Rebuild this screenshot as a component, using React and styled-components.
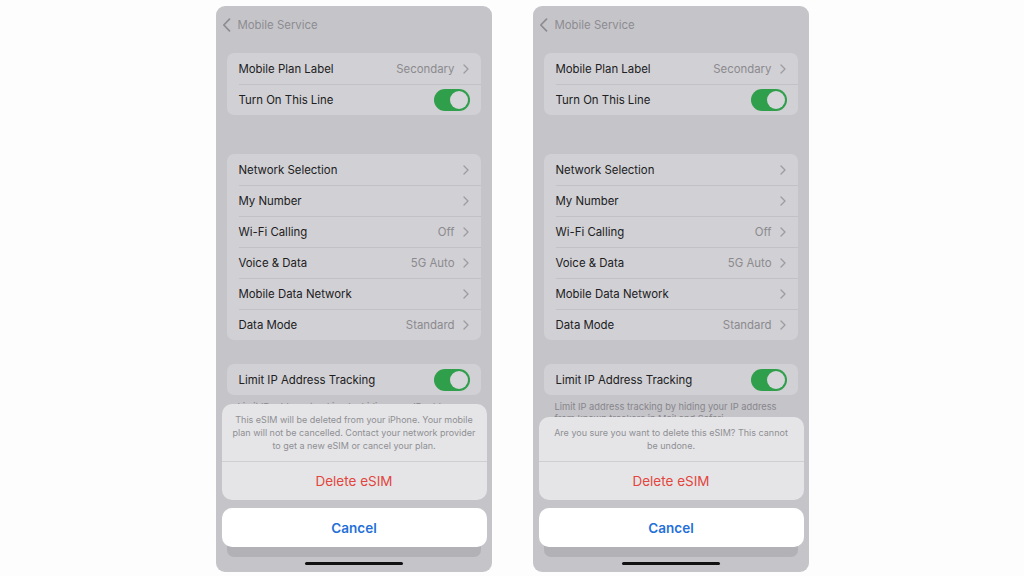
import React from "react";
import styled, { createGlobalStyle } from "styled-components";

const GlobalStyle = createGlobalStyle`
  html, body {
    margin: 0;
    padding: 0;
    background: #fdfdfd;
  }
  body {
    font-family: Inter, "Noto Sans", "Liberation Sans", sans-serif;
    -webkit-font-smoothing: antialiased;
  }
`;

const Page = styled.main`
  width: 1024px;
  height: 576px;
  display: flex;
  justify-content: center;
  align-items: flex-start;
  gap: 41px;
  padding-top: 6px;
  box-sizing: border-box;
`;

const Phone = styled.section`
  position: relative;
  width: 276px;
  height: 566px;
  border-radius: 9px;
  overflow: hidden;
  background: #c5c4c9;
  display: flex;
  flex-direction: column;
  padding: 0 11px;
  box-sizing: border-box;
`;

const Header = styled.header`
  height: 37px;
  display: flex;
  align-items: center;
  gap: 7px;
  margin-left: -5px;
  color: #8d8c91;
  font-size: 11.4px;
  margin-bottom: 10px;
`;

const Card = styled.div`
  background: #d1d0d4;
  border-radius: 7px;
  margin-bottom: ${(p) => p.$gap || 0}px;
`;

const Row = styled.div`
  height: 31px;
  display: flex;
  align-items: center;
  padding: 0 12px;
  position: relative;
  font-size: 11.4px;
  color: #202022;

  & + &::before {
    content: "";
    position: absolute;
    top: 0;
    left: 12px;
    right: 0;
    height: 1px;
    background: #c2c1c6;
  }
`;

const Label = styled.span`
  flex: 1;
`;

const Value = styled.span`
  color: #8b8a8f;
  margin-right: 8px;
`;

const Toggle = styled.div`
  width: 36px;
  height: 22px;
  border-radius: 11px;
  background: #2f9f4c;
  position: relative;
  margin-right: -1px;

  &::after {
    content: "";
    position: absolute;
    right: 2px;
    top: 2px;
    width: 18px;
    height: 18px;
    border-radius: 50%;
    background: #d6d5d9;
  }
`;

const Footnote = styled.p`
  margin: 6px 0 0;
  padding: 0 11px;
  font-size: 9.3px;
  line-height: 12px;
  color: #87868b;
`;

const Spacer = styled.div`
  flex: 1;
`;

const BottomCard = styled.div`
  height: 20px;
  background: #b2b1b6;
  border-radius: 0 0 7px 7px;
  margin-bottom: 15px;
`;

const Overlay = styled.div`
  position: absolute;
  left: 6px;
  right: 5px;
  bottom: 25px;
  display: flex;
  flex-direction: column;
  gap: 8px;
`;

const Sheet = styled.div`
  background: #e5e5e7;
  border-radius: 10px;
  overflow: hidden;
`;

const Message = styled.p`
  margin: 0;
  padding: 9px ${(p) => p.$inset}px;
  text-align: center;
  font-size: 9px;
  line-height: 13px;
  color: #8f8f94;
  border-bottom: 1px solid #cfcfd2;
`;

const SheetButton = styled.div`
  height: ${(p) => (p.$cancel ? 39 : 38)}px;
  display: flex;
  align-items: center;
  justify-content: center;
  font-size: 13.5px;
  font-weight: ${(p) => (p.$cancel ? 600 : 400)};
  color: ${(p) => (p.$cancel ? "#1f70d8" : "#e2463e")};
  background: ${(p) => (p.$cancel ? "#ffffff" : "transparent")};
  border-radius: ${(p) => (p.$cancel ? "10px" : "0")};
`;

const HomeBar = styled.div`
  position: absolute;
  left: 50%;
  bottom: 7px;
  width: 98px;
  height: 3px;
  margin-left: -49px;
  border-radius: 2px;
  background: #111;
`;

const Chevron = () => (
  <svg width="6" height="10" viewBox="0 0 6 10">
    <path d="M1 1l4 4-4 4" fill="none" stroke="#9d9ca1" strokeWidth="1.3" strokeLinecap="round" strokeLinejoin="round" />
  </svg>
);

const BackChevron = () => (
  <svg width="9" height="14" viewBox="0 0 9 14">
    <path d="M7.5 1.2L1.8 7l5.7 5.8" fill="none" stroke="#8d8c91" strokeWidth="1.7" strokeLinecap="round" strokeLinejoin="round" />
  </svg>
);

const networkRows = [
  ["Network Selection", ""],
  ["My Number", ""],
  ["Wi-Fi Calling", "Off"],
  ["Voice & Data", "5G Auto"],
  ["Mobile Data Network", ""],
  ["Data Mode", "Standard"],
];

function Screen({ message, inset }) {
  return (
    <Phone>
      <Header>
        <BackChevron />
        Mobile Service
      </Header>
      <Card $gap={39}>
        <Row>
          <Label>Mobile Plan Label</Label>
          <Value>Secondary</Value>
          <Chevron />
        </Row>
        <Row>
          <Label>Turn On This Line</Label>
          <Toggle />
        </Row>
      </Card>
      <Card $gap={24}>
        {networkRows.map(([label, value]) => (
          <Row key={label}>
            <Label>{label}</Label>
            {value && <Value>{value}</Value>}
            <Chevron />
          </Row>
        ))}
      </Card>
      <Card>
        <Row>
          <Label>Limit IP Address Tracking</Label>
          <Toggle />
        </Row>
      </Card>
      <Footnote>
        Limit IP address tracking by hiding your IP address from known trackers in Mail and Safari.
      </Footnote>
      <Spacer />
      <BottomCard />
      <Overlay>
        <Sheet>
          <Message $inset={inset}>{message}</Message>
          <SheetButton>Delete eSIM</SheetButton>
        </Sheet>
        <SheetButton $cancel>Cancel</SheetButton>
      </Overlay>
      <HomeBar />
    </Phone>
  );
}

export default function App() {
  return (
    <>
      <GlobalStyle />
      <Page>
        <Screen
          inset={9}
          message="This eSIM will be deleted from your iPhone. Your mobile plan will not be cancelled. Contact your network provider to get a new eSIM or cancel your plan."
        />
        <Screen
          inset={14}
          message="Are you sure you want to delete this eSIM? This cannot be undone."
        />
      </Page>
    </>
  );
}
